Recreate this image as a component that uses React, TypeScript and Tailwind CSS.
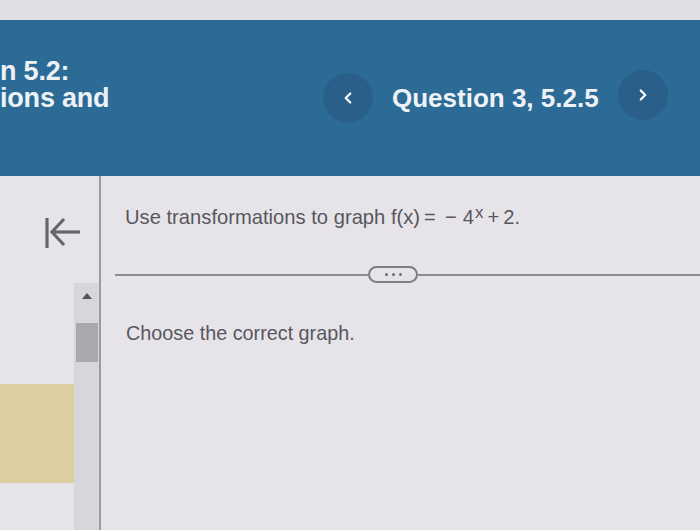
import { ChevronLeft, ChevronRight } from 'lucide-react';

export default function App() {
  return (
    <div
      className="w-[700px] h-[530px] overflow-hidden flex flex-col bg-[#e6e4e9]"
      style={{ fontFamily: '"Liberation Sans", Arial, sans-serif' }}
    >
      <div className="h-[20px] bg-[#e2dee5]" />

      <header className="h-[156px] bg-[#2d6b97] flex items-center text-[#eef2f6] font-bold">
        <div className="w-[300px] mb-[26px] text-[27px] leading-[27px] tracking-[-0.2px] whitespace-nowrap">
          <div>n 5.2:</div>
          <div>ions and</div>
        </div>
        <button className="w-[50px] h-[50px] rounded-full bg-[#295f88] flex items-center justify-center ml-[23px]">
          <ChevronLeft size={18} strokeWidth={3} className="text-white" />
        </button>
        <div className="ml-[19px] w-[210px] text-[26px] whitespace-nowrap">Question 3, 5.2.5</div>
        <button className="w-[50px] h-[50px] rounded-full bg-[#295f88] flex items-center justify-center ml-[16px] mb-[6px]">
          <ChevronRight size={18} strokeWidth={3} className="text-white" />
        </button>
      </header>

      <div className="flex flex-1">
        <aside className="w-[101px] border-r-2 border-[#9d9ba2] flex flex-col">
          <div className="h-[107px] pt-[41px] pl-[45px]">
            <svg width="36" height="32" viewBox="0 0 36 32" fill="none" stroke="#66656b" strokeWidth="3.2">
              <path d="M2 1v30" />
              <path d="M35 15H7" />
              <path d="M19 2L7 15l12 13" />
            </svg>
          </div>
          <div className="flex flex-1">
            <div className="w-[74px] flex flex-col">
              <div className="h-[101px]" />
              <div className="h-[99px] bg-[#dccf9f]" />
            </div>
            <div className="w-[25px] bg-[#d8d6dc] flex flex-col items-center">
              <div className="mt-[10px] w-0 h-0 border-l-[5px] border-r-[5px] border-b-[6px] border-l-transparent border-r-transparent border-b-[#55545a]" />
              <div className="mt-[24px] w-[22px] h-[39px] bg-[#a9a8ae]" />
            </div>
          </div>
        </aside>

        <main className="flex-1 pt-[26px] text-[#58575d] text-[20.2px]">
          <p className="pl-[24px] whitespace-nowrap">
            Use transformations to graph f(x)<span className="ml-[4px]">=</span>
            <span className="ml-[9px]">−</span>
            <span className="ml-[6px]">4</span>
            <sup className="text-[17px] relative -top-[6px] ml-[1px]">x</sup>
            <span className="ml-[4px]">+</span>
            <span className="ml-[4px]">2.</span>
          </p>
          <div className="flex items-center mt-[34px] pl-[14px]">
            <div className="w-[253px] h-[2px] bg-[#8e8c93]" />
            <div className="w-[50px] h-[17px] rounded-full border-2 border-[#7f7d84] flex items-center justify-center gap-[4px]">
              <span className="w-[3px] h-[3px] rounded-full bg-[#6f6d74]" />
              <span className="w-[3px] h-[3px] rounded-full bg-[#6f6d74]" />
              <span className="w-[3px] h-[3px] rounded-full bg-[#6f6d74]" />
            </div>
            <div className="flex-1 h-[2px] bg-[#8e8c93]" />
          </div>
          <p className="pl-[25px] mt-[36px] text-[19.8px]">Choose the correct graph.</p>
        </main>
      </div>
    </div>
  );
}
